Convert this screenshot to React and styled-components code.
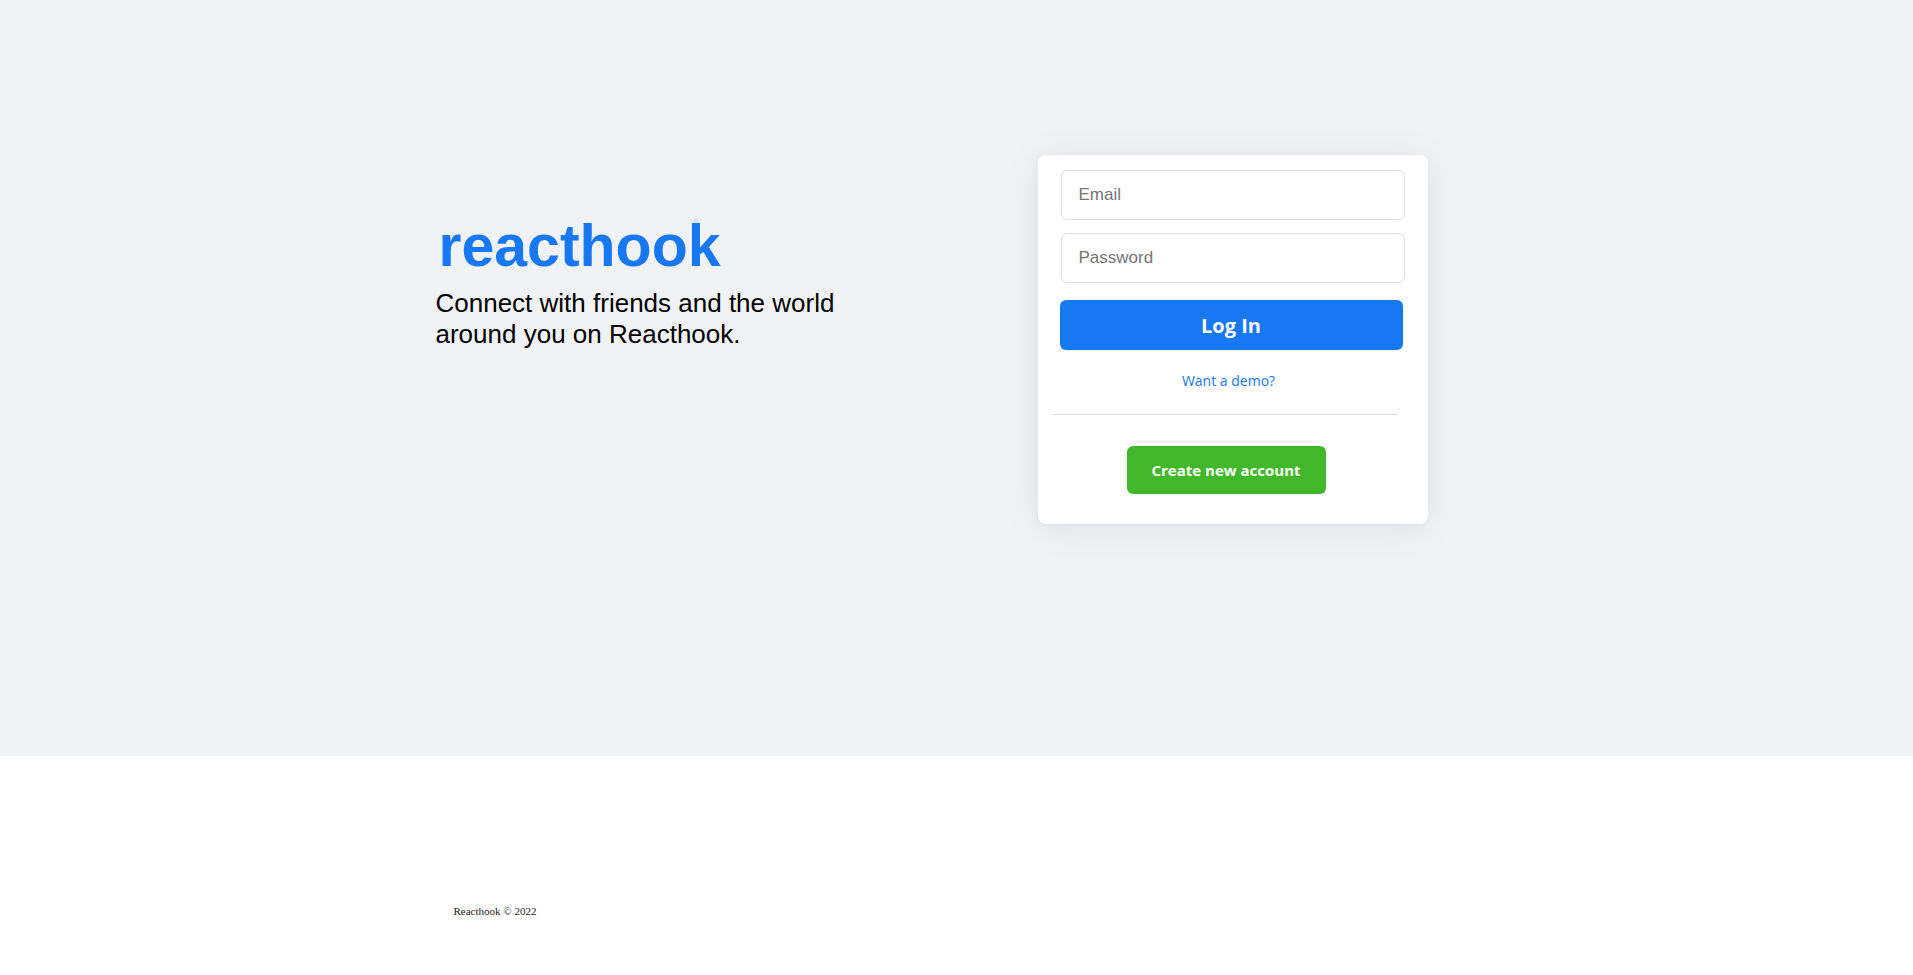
import React from 'react'
import styled, { createGlobalStyle } from 'styled-components'

const GlobalStyle = createGlobalStyle`
  html, body {
    margin: 0;
    padding: 0;
    background: #ffffff;
  }
  * {
    box-sizing: border-box;
  }
`;

export const Main = styled.main`
  background: #f0f2f5;
  height: 756px;
  padding-top: 155px;
`;

export const Row = styled.div`
  display: flex;
  align-items: flex-start;
  width: 1042px;
  margin: 0 auto;
  padding-right: 50px;
`;

export const Intro = styled.div`
  flex: 0 0 500px;
  padding-top: 57px;
`;

export const Logo = styled.h1`
  margin: 0 0 8px;
  color: #1877f2;
  font-family: "Liberation Sans", Arial, sans-serif;
  font-size: 59px;
  font-weight: 700;
  line-height: normal;
  padding-left: 3px;
`;

export const Tagline = styled.p`
  margin: 0;
  width: 460px;
  color: #000;
  font-family: "Liberation Sans", Arial, sans-serif;
  font-size: 26px;
  line-height: 31px;
`;

export const Card = styled.form`
  margin-left: auto;
  width: 390px;
  background: #fff;
  border-radius: 8px;
  box-shadow: 0 4px 36px rgba(0, 0, 0, 0.08), 0 1px 4px rgba(0, 0, 0, 0.04);
  padding: 15px 23px 30px;
  display: flex;
  flex-direction: column;
`;

export const Field = styled.input`
  width: 100%;
  height: 50px;
  border: 1px solid #dddfe2;
  border-radius: 6px;
  padding: 0 17px;
  font-family: "Liberation Sans", Arial, sans-serif;
  font-size: 17px;
  color: #1c1e21;
  outline: none;
  margin-bottom: ${p => p.$last ? '17px' : '13px'};

  &::placeholder {
    color: #757575;
  }
`;

export const LoginButton = styled.button`
  height: 50px;
  margin: 0 2px 0 -1px;
  border: none;
  border-radius: 6px;
  background: #1877f2;
  color: #fff;
  font-family: "Open Sans", "Noto Sans", sans-serif;
  font-size: 20px;
  font-weight: 700;
  cursor: pointer;
`;

export const DemoLink = styled.a`
  margin-top: 21px;
  align-self: center;
  margin-right: 8px;
  color: #1877f2;
  font-family: "Open Sans", "Noto Sans", sans-serif;
  font-size: 14px;
  line-height: 20px;
  text-decoration: none;
  cursor: pointer;
`;

export const Divider = styled.hr`
  margin: 23px 7px 0 -8px;
  border: none;
  border-top: 1px solid #dadde1;
`;

export const CreateButton = styled.button`
  align-self: center;
  margin: 31px 13px 0 0;
  height: 48px;
  width: 199px;
  border: none;
  border-radius: 6px;
  background: #42b72a;
  color: #fff;
  font-family: "Open Sans", "Noto Sans", sans-serif;
  font-size: 15px;
  font-weight: 700;
  cursor: pointer;
`;

export const Footer = styled.footer`
  height: 219px;
  padding-top: 149px;
`;

export const FooterInner = styled.div`
  width: 1042px;
  margin: 0 auto;
  padding-left: 18px;
  font-family: "Liberation Serif", "Times New Roman", serif;
  font-size: 11px;
  color: #1c1e21;
`;

export default function App() {
  return (
    <>
      <GlobalStyle />
      <Main>
        <Row>
          <Intro>
            <Logo>reacthook</Logo>
            <Tagline>Connect with friends and the world around you on Reacthook.</Tagline>
          </Intro>
          <Card onSubmit={e => e.preventDefault()}>
            <Field type="email" placeholder="Email" />
            <Field type="password" placeholder="Password" $last />
            <LoginButton type="submit">Log In</LoginButton>
            <DemoLink>Want a demo?</DemoLink>
            <Divider />
            <CreateButton type="button">Create new account</CreateButton>
          </Card>
        </Row>
      </Main>
      <Footer>
        <FooterInner>Reacthook © 2022</FooterInner>
      </Footer>
    </>
  )
}
